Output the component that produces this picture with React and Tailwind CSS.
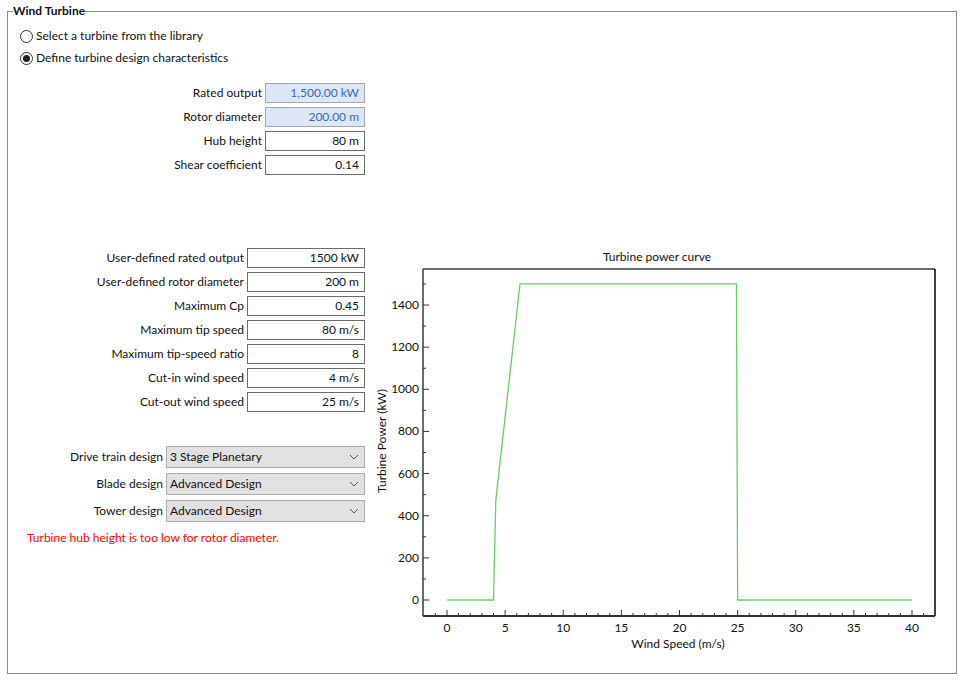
import React from "react";

const font = { fontFamily: 'Lato, "Noto Sans", sans-serif' };

const topFields = [
  { label: "Rated output", value: "1,500.00 kW", disabled: true },
  { label: "Rotor diameter", value: "200.00 m", disabled: true },
  { label: "Hub height", value: "80 m" },
  { label: "Shear coefficient", value: "0.14" },
];

const userFields = [
  { label: "User-defined rated output", value: "1500 kW" },
  { label: "User-defined rotor diameter", value: "200 m" },
  { label: "Maximum Cp", value: "0.45" },
  { label: "Maximum tip speed", value: "80 m/s" },
  { label: "Maximum tip-speed ratio", value: "8" },
  { label: "Cut-in wind speed", value: "4 m/s" },
  { label: "Cut-out wind speed", value: "25 m/s" },
];

const designs = [
  { label: "Drive train design", value: "3 Stage Planetary" },
  { label: "Blade design", value: "Advanced Design" },
  { label: "Tower design", value: "Advanced Design" },
];

function Radio({ checked, label }) {
  return (
    <div className="flex items-center h-[22px] gap-[3px]">
      <span className="w-[13px] h-[13px] rounded-full border border-[#333] bg-white flex items-center justify-center">
        {checked && <span className="w-[7px] h-[7px] rounded-full bg-[#222]"></span>}
      </span>
      <span className="text-[12px] text-[#111]">{label}</span>
    </div>
  );
}

function Chevron() {
  return (
    <svg width="10" height="6" viewBox="0 0 10 6" className="shrink-0">
      <polyline points="1,1 5,5 9,1" fill="none" stroke="#555" strokeWidth="1" />
    </svg>
  );
}

const xm = (v) => 76 + 11.625 * v;
const ym = (p) => 352 - 0.2107 * p;

function PowerCurve() {
  const curve = [
    [0, 0],
    [4, 0],
    [4.2, 474],
    [6.28, 1500],
    [24.9, 1500],
    [25, 0],
    [40, 0],
  ]
    .map(([v, p]) => `${xm(v)},${ym(p)}`)
    .join(" ");

  const xTicks = [];
  for (let i = -1; i <= 41; i++) xTicks.push(i);
  const yTicks = [];
  for (let p = 0; p <= 1500; p += 100) yTicks.push(p);

  return (
    <svg width="570" height="410" className="ml-[6px] shrink-0" style={font}>
      <text x="286" y="13" textAnchor="middle" fontSize="12" fill="#111">
        Turbine power curve
      </text>
      <rect x="52" y="21" width="512" height="347" fill="#fff" />
      <line x1="52" y1="21" x2="564" y2="21" stroke="#6b6b6b" strokeWidth="2" />
      <line x1="52" y1="21" x2="52" y2="368" stroke="#6b6b6b" strokeWidth="2" />
      <line x1="564" y1="21" x2="564" y2="368" stroke="#000" strokeWidth="1.5" />
      <line x1="52" y1="368" x2="564" y2="368" stroke="#333" strokeWidth="2" />
      {xTicks.map((v) => (
        <line
          key={v}
          x1={xm(v)}
          x2={xm(v)}
          y1={368}
          y2={v % 5 === 0 ? 362 : 365}
          stroke="#333"
          strokeWidth="1"
        />
      ))}
      {[0, 5, 10, 15, 20, 25, 30, 35, 40].map((v) => (
        <text key={v} x={xm(v)} y="384" textAnchor="middle" fontSize="12" fill="#111">
          {v}
        </text>
      ))}
      {yTicks.map((p) => (
        <line
          key={p}
          x1={52}
          x2={p % 200 === 0 ? 58 : 55}
          y1={ym(p)}
          y2={ym(p)}
          stroke="#333"
          strokeWidth="1"
        />
      ))}
      {[0, 200, 400, 600, 800, 1000, 1200, 1400].map((p) => (
        <text key={p} x="48" y={ym(p) + 4} textAnchor="end" fontSize="12" fill="#111">
          {p}
        </text>
      ))}
      <text
        x="15"
        y="193"
        textAnchor="middle"
        fontSize="12"
        fill="#111"
        transform="rotate(-90 15 193)"
      >
        Turbine Power (kW)
      </text>
      <text x="307" y="400" textAnchor="middle" fontSize="12" fill="#111">
        Wind Speed (m/s)
      </text>
      <polyline points={curve} fill="none" stroke="#6cc96c" strokeWidth="1.3" />
    </svg>
  );
}

export default function App() {
  return (
    <div className="w-[980px] h-[693px] bg-white overflow-hidden pt-[3px] pl-[7px]" style={font}>
      <fieldset className="w-[950px] h-[671px] border border-[#8a8a8a]">
        <legend className="ml-[5px] text-[12px] font-bold leading-[16px] text-[#111]">Wind Turbine</legend>

        <div className="pl-[12px] mt-[6px]">
          <Radio label="Select a turbine from the library" />
          <Radio checked label="Define turbine design characteristics" />
        </div>

        {/* calculated values */}
        <div className="mt-[14px] flex flex-col gap-[4px]">
          {topFields.map((f) => (
            <div key={f.label} className="flex items-center h-[20px]">
              <span className="w-[257px] pr-[3px] text-right text-[12px] text-[#111]">{f.label}</span>
              <span
                className={`w-[100px] h-[20px] border px-[5px] text-right text-[12px] leading-[18px] ${
                  f.disabled
                    ? "bg-[#dce6f4] border-[#a8a8a8] text-[#3d6cb0]"
                    : "bg-white border-[#6b6b6b] text-[#111]"
                }`}
              >
                {f.value}
              </span>
            </div>
          ))}
        </div>

        <div className="mt-[73px] flex">
          <div className="w-[357px] shrink-0">
            <div className="flex flex-col gap-[4px]">
              {userFields.map((f) => (
                <div key={f.label} className="flex items-center h-[20px]">
                  <span className="w-[239px] pr-[3px] text-right text-[12px] text-[#111]">{f.label}</span>
                  <span className="w-[118px] h-[20px] border border-[#6b6b6b] bg-white px-[5px] text-right text-[12px] leading-[18px] text-[#111]">
                    {f.value}
                  </span>
                </div>
              ))}
            </div>

            <div className="mt-[34px] flex flex-col gap-[5px]">
              {designs.map((d) => (
                <div key={d.label} className="flex items-center h-[22px]">
                  <span className="w-[158px] pr-[3px] text-right text-[12px] text-[#111]">{d.label}</span>
                  <div className="w-[199px] h-[22px] border border-[#adadad] bg-[#e1e1e1] flex items-center justify-between pl-[3px] pr-[5px]">
                    <span className="text-[12px] text-[#111]">{d.value}</span>
                    <Chevron />
                  </div>
                </div>
              ))}
            </div>

            <p className="mt-[8px] pl-[19px] text-[12px] leading-[16px] text-[#ff0000]">
              Turbine hub height is too low for rotor diameter.
            </p>
          </div>

          <PowerCurve />
        </div>
      </fieldset>
    </div>
  );
}
